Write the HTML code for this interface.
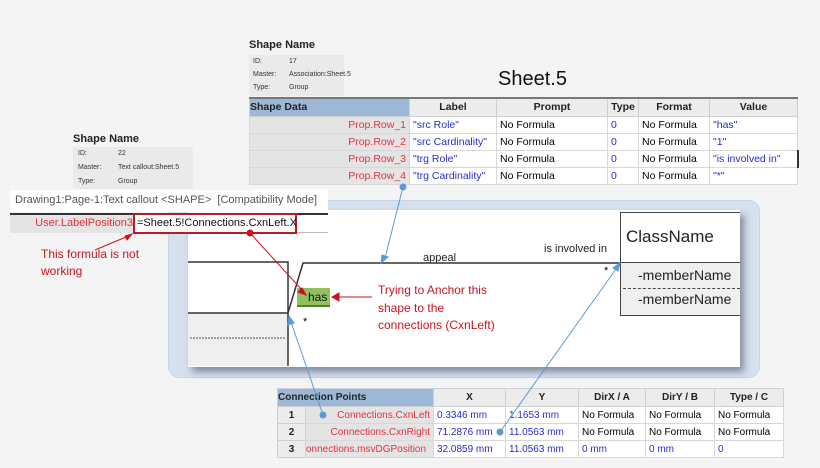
<!DOCTYPE html>
<html><head><meta charset="utf-8"><style>
*{margin:0;padding:0;box-sizing:border-box}
body{width:820px;height:468px;background:#f4f4f4;position:relative;overflow:hidden;font-family:"Liberation Sans",sans-serif}
.a{position:absolute;white-space:nowrap}
.sn{font-weight:bold;font-size:11px;color:#222}
.ib{background:#eaeaea;font-size:7px;color:#333}
table{border-collapse:collapse;position:absolute;font-size:10.5px;table-layout:fixed}
td{height:17px;border:1px solid #d8d8d8;background:#fff;padding:0 3px;white-space:nowrap;overflow:hidden}
th{height:18px;background:#ececec;border:1px solid #cfcfcf;font-weight:bold;color:#222;text-align:center;white-space:nowrap}
th.h{background:#9db8d6;text-align:left}
td.r{background:#e4e4e4;color:#e0333c;text-align:right}
.b{color:#2a2ad0}
.red{color:#c8141e}
</style></head><body>

<div class="a sn" style="left:249px;top:39px">Shape Name</div>
<div class="a ib" style="left:249px;top:55px;width:95px;height:41px">
<div class="a" style="left:4px;top:3px">ID:</div><div class="a" style="left:40px;top:3px">17</div>
<div class="a" style="left:4px;top:16px">Master:</div><div class="a" style="left:40px;top:16px">Association:Sheet.5</div>
<div class="a" style="left:4px;top:29px">Type:</div><div class="a" style="left:40px;top:29px">Group</div></div>
<div class="a" style="left:498px;top:68px;font-size:20px;color:#111">Sheet.5</div>

<table style="left:249px;top:97px;width:548px;border-top:2px solid #777">
<colgroup><col style="width:160px"><col style="width:87px"><col style="width:111px"><col style="width:31px"><col style="width:71px"><col style="width:88px"></colgroup>
<tr><th class="h">Shape Data</th><th>Label</th><th>Prompt</th><th>Type</th><th>Format</th><th>Value</th></tr>
<tr><td class="r">Prop.Row_1</td><td class="b">"src Role"</td><td>No Formula</td><td class="b">0</td><td>No Formula</td><td class="b">"has"</td></tr>
<tr><td class="r">Prop.Row_2</td><td class="b">"src Cardinality"</td><td>No Formula</td><td class="b">0</td><td>No Formula</td><td class="b">"1"</td></tr>
<tr><td class="r">Prop.Row_3</td><td class="b">"trg Role"</td><td>No Formula</td><td class="b">0</td><td>No Formula</td><td class="b" style="border-right:2px solid #333">"is involved in"</td></tr>
<tr><td class="r">Prop.Row_4</td><td class="b">"trg Cardinality"</td><td>No Formula</td><td class="b">0</td><td>No Formula</td><td class="b">"*"</td></tr>
</table>

<div class="a sn" style="left:73px;top:133px">Shape Name</div>
<div class="a ib" style="left:73px;top:147px;width:120px;height:42px">
<div class="a" style="left:5px;top:3px">ID:</div><div class="a" style="left:45px;top:3px">22</div>
<div class="a" style="left:5px;top:17px">Master:</div><div class="a" style="left:45px;top:17px">Text callout:Sheet.5</div>
<div class="a" style="left:5px;top:31px">Type:</div><div class="a" style="left:45px;top:31px">Group</div></div>

<div class="a" style="left:168px;top:200px;width:592px;height:178px;background:#d6e1ee;border-radius:11px;border:1px solid #c7d5e6"></div>
<div class="a" style="left:188px;top:210px;width:552px;height:157px;background:#fff;box-shadow:4px 5px 7px rgba(60,70,90,.55)"></div>

<div class="a" style="left:10px;top:190px;width:318px;height:22px;background:#fff;font-size:11px;color:#555;padding:4px 0 0 5px">Drawing1:Page-1:Text callout &lt;SHAPE&gt;&nbsp; [Compatibility Mode]</div>
<div class="a" style="left:10px;top:213px;width:318px;height:20px;background:#fff;border-top:2px solid #333;border-bottom:1px solid #bbb"></div>
<div class="a" style="left:10px;top:215px;width:123px;height:18px;background:#e4e4e4;color:#e0333c;font-size:11px;text-align:right;padding-top:2px">User.LabelPosition3</div>
<div class="a" style="left:133px;top:213px;width:164px;height:21px;border:2px solid #b81c22;font-size:11px;color:#111;padding:2px 0 0 2px;background:#fff">=Sheet.5!Connections.CxnLeft.X</div>

<div class="a red" style="left:41px;top:246px;font-size:12px;line-height:17px">This formula is not<br>working</div>
<div class="a red" style="left:378px;top:282px;font-size:12px;line-height:17.5px">Trying to Anchor this<br>shape to the<br>connections (CxnLeft)</div>

<div class="a" style="left:188px;top:313px;width:100px;height:53px;background:#efefef"></div>
<div class="a" style="left:620px;top:263px;width:120px;height:52px;background:#efefef"></div>
<div class="a" style="left:620px;top:212px;width:120px;height:104px;border:1.5px solid #444;border-right:none"></div>
<div class="a" style="left:620px;top:262px;width:120px;border-top:1.5px solid #444"></div>
<div class="a" style="left:626px;top:227px;font-size:17px;color:#222">ClassName</div>
<div class="a" style="left:638px;top:267px;font-size:14px;color:#222">-memberName</div>
<div class="a" style="left:638px;top:291px;font-size:14px;color:#222">-memberName</div>
<div class="a" style="left:623px;top:288px;width:117px;border-top:1px dashed #444"></div>
<div class="a" style="left:544px;top:243px;font-size:11px;color:#222">is involved in</div>
<div class="a" style="left:423px;top:252px;font-size:11px;color:#222">appeal</div>
<div class="a" style="left:297px;top:288px;width:33px;height:19px;background:#92c060;border-bottom:2px solid #567d33;font-size:12px;color:#111;padding:2px 0 0 11px">has</div>
<div class="a" style="left:303px;top:316px;font-size:11px">*</div>
<div class="a" style="left:604px;top:265px;font-size:11px">*</div>

<table style="left:277px;top:388px;width:506px;font-size:10px">
<colgroup><col style="width:28px"><col style="width:128px"><col style="width:72px"><col style="width:73px"><col style="width:67px"><col style="width:69px"><col style="width:69px"></colgroup>
<tr><th class="h" colspan="2">Connection Points</th><th>X</th><th>Y</th><th>DirX / A</th><th>DirY / B</th><th>Type / C</th></tr>
<tr><th style="height:17px">1</th><td class="r">Connections.CxnLeft</td><td class="b">0.3346 mm</td><td class="b">1.1653 mm</td><td>No Formula</td><td>No Formula</td><td>No Formula</td></tr>
<tr><th style="height:17px">2</th><td class="r">Connections.CxnRight</td><td class="b">71.2876 mm</td><td class="b">11.0563 mm</td><td>No Formula</td><td>No Formula</td><td>No Formula</td></tr>
<tr><th style="height:17px">3</th><td class="r" style="text-align:left;padding:0">onnections.msvDGPosition</td><td class="b">32.0859 mm</td><td class="b">11.0563 mm</td><td class="b">0 mm</td><td class="b">0 mm</td><td class="b">0</td></tr>
</table>

<svg class="a" style="left:0;top:0" width="820" height="468">
<g fill="none" stroke="#333" stroke-width="1.5">
<path d="M188 262H288V366M188 313H288L303 263H620"/>
</g>
<path d="M190 338H286" stroke="#555" stroke-dasharray="2 1"/>
<g stroke="#5b9bd5" stroke-width="1" fill="#5b9bd5">
<path d="M403 187L385 258"/><path d="M381 263l1-8 6 2z"/>
<path d="M323 415L291 322"/><path d="M289 316l5 7-6 2z"/>
<path d="M500 432L616 269"/><path d="M620 263l-2 8-5-3z"/>
<circle cx="403" cy="187" r="3"/><circle cx="323" cy="415" r="3"/><circle cx="500" cy="432" r="3"/>
</g>
<g stroke="#c8141e" stroke-width="1" fill="#c8141e">
<path d="M250 233L302 290"/><path d="M306 295l-8-3 4-4z"/><circle cx="250" cy="233" r="3"/>
<path d="M372 297H338"/><path d="M332 297l7-4v8z"/>
<path d="M95 250L126 237"/><path d="M132 234l-5 6-2-4z"/>
</g>
</svg>
</body></html>
